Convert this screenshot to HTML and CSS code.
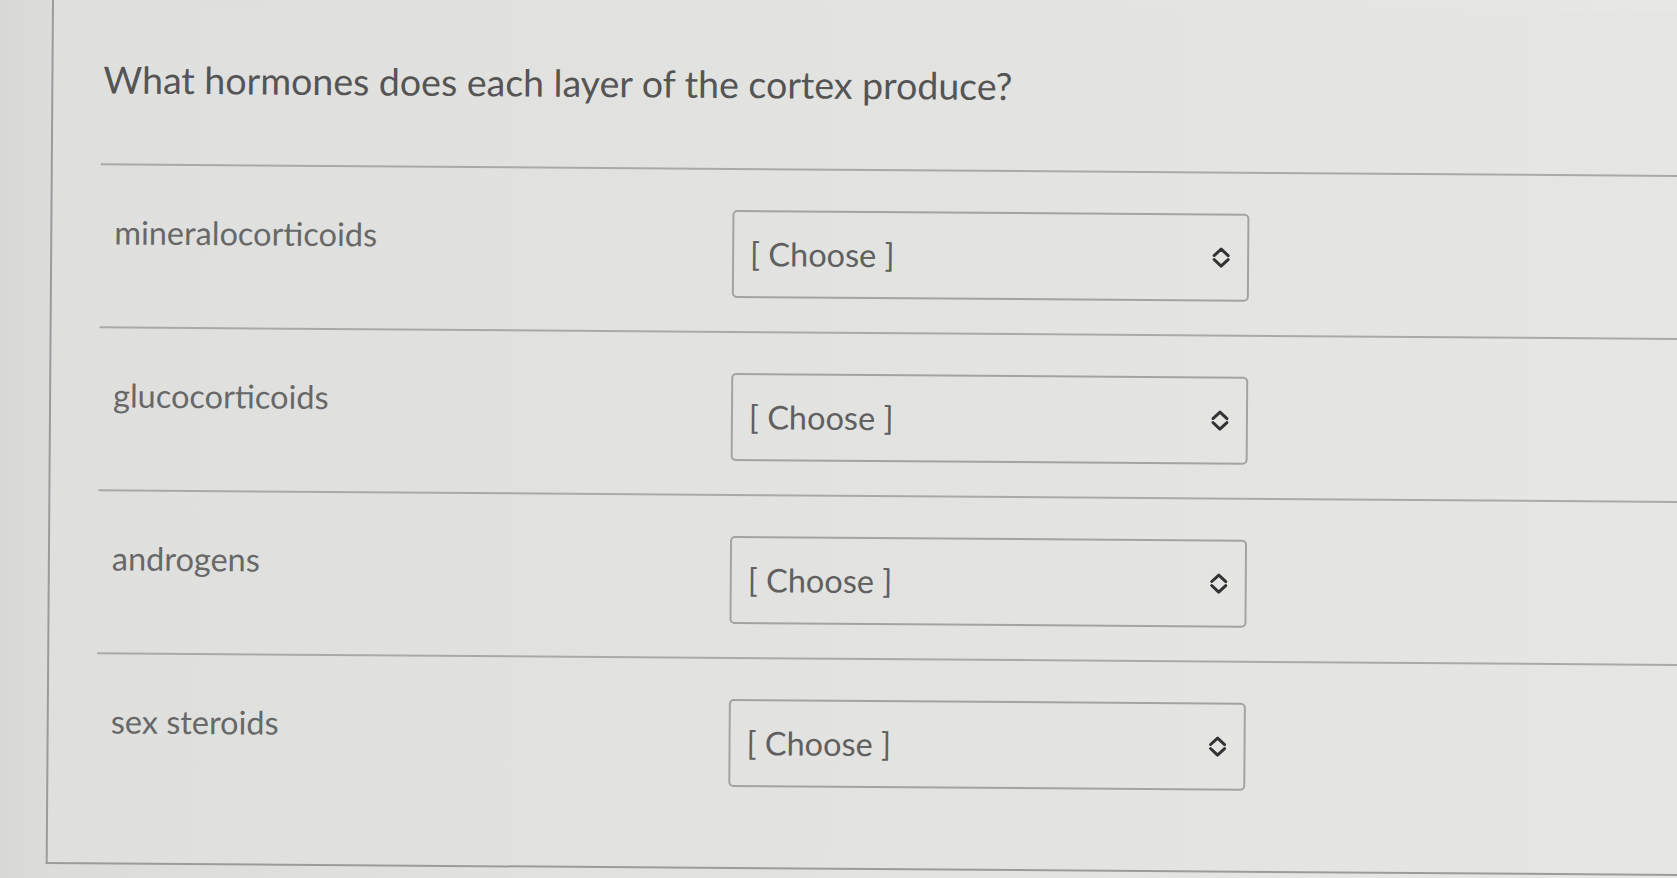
FILE: index.html
```html
<!DOCTYPE html>
<html lang="en">
<head>
<meta charset="utf-8">
<title>Quiz question</title>
<link rel="stylesheet" href="styles.css">
</head>
<body>
<div class="page">
  <div class="card">
    <h1 class="question">What hormones does each layer of the cortex produce?</h1>
    <div class="answers">
      <div class="row">
        <div class="label">mineralocorticoids</div>
        <div class="select">
          <span class="choose">[ Choose ]</span>
          <svg class="chev" viewBox="0 0 20 26" width="20" height="26"><path d="M3 11 L10 4.5 L17 11 M3 15 L10 21.5 L17 15"/></svg>
        </div>
      </div>
      <div class="row">
        <div class="label">glucocorticoids</div>
        <div class="select">
          <span class="choose">[ Choose ]</span>
          <svg class="chev" viewBox="0 0 20 26" width="20" height="26"><path d="M3 11 L10 4.5 L17 11 M3 15 L10 21.5 L17 15"/></svg>
        </div>
      </div>
      <div class="row">
        <div class="label">androgens</div>
        <div class="select">
          <span class="choose">[ Choose ]</span>
          <svg class="chev" viewBox="0 0 20 26" width="20" height="26"><path d="M3 11 L10 4.5 L17 11 M3 15 L10 21.5 L17 15"/></svg>
        </div>
      </div>
      <div class="row">
        <div class="label">sex steroids</div>
        <div class="select">
          <span class="choose">[ Choose ]</span>
          <svg class="chev" viewBox="0 0 20 26" width="20" height="26"><path d="M3 11 L10 4.5 L17 11 M3 15 L10 21.5 L17 15"/></svg>
        </div>
      </div>
    </div>
  </div>
</div>
</body>
</html>
```
FILE: styles.css
```css
html, body {
  margin: 0;
  padding: 0;
  height: 100%;
  overflow: hidden;
}
body {
  background: linear-gradient(90deg, #d8d9d7 0%, #dcdddb 3%, #e1e2e0 30%, #e4e5e3 70%, #e7e8e6 100%);
  font-family: Lato, "Open Sans", "Liberation Sans", sans-serif;
}
.page {
  padding-left: 52px;
}
.card {
  width: 1700px;
  height: 864px;
  box-sizing: border-box;
  border-left: 2px solid #9b9b9b;
  border-bottom: 2px solid #9b9b9b;
  background: linear-gradient(90deg, #dfe0de 0%, #e2e3e1 40%, #e6e7e5 100%);
  transform: rotate(0.42deg);
  transform-origin: 0 0;
  padding-top: 55px;
}
.question {
  margin: 0 0 60px 50px;
  font-size: 37.5px;
  line-height: 48px;
  font-weight: 400;
  color: #555;
}
.answers {
  margin-left: 48px;
}
.row {
  display: flex;
  align-items: flex-start;
  border-top: 2px solid #a9aaa8;
  padding: 40px 0 33px 14px;
  height: 88px;
}
.label {
  width: 618px;
  margin-top: 8px;
  font-size: 32.5px;
  line-height: 38px;
  font-weight: 400;
  color: #686868;
}
.select {
  width: 517px;
  height: 88px;
  box-sizing: border-box;
  border: 2px solid #a3a4a2;
  border-radius: 5px;
  display: flex;
  align-items: center;
  justify-content: space-between;
  padding: 0 16px 0 16px;
}
.choose {
  font-size: 32.5px;
  line-height: 38px;
  font-weight: 400;
  color: #606060;
}
.chev {
  fill: none;
  stroke: #333;
  stroke-width: 3;
  stroke-linecap: round;
  stroke-linejoin: round;
}
```
